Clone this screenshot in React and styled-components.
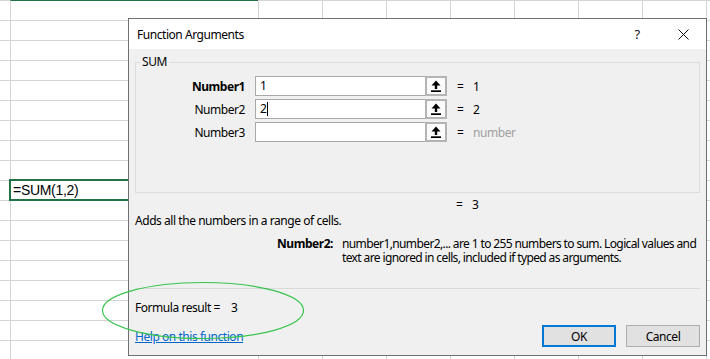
import styled, { createGlobalStyle } from "styled-components";

const GlobalStyle = createGlobalStyle`
  html, body {
    margin: 0;
    padding: 0;
    background: #fff;
  }
  body {
    width: 710px;
    height: 359px;
    overflow: hidden;
    font-family: "Noto Sans", "Liberation Sans", sans-serif;
  }
`;

const COLUMN_COUNT = 10;
const ROW_COUNT = 18;
const SELECTED_ROW = 9;

const args = [
  { name: "Number1", value: "1", result: "1", bold: true },
  { name: "Number2", value: "2", result: "2", caret: true },
  { name: "Number3", value: "", result: "number", muted: true },
];

const Screen = styled.div`
  position: relative;
  width: 710px;
  height: 359px;
  overflow: hidden;
`;

const Sheet = styled.div`
  display: grid;
  grid-template-columns: 10px 248px repeat(8, 64px);
  grid-auto-rows: 20px;
`;

const Cell = styled.div`
  box-sizing: border-box;
  border-left: ${(p) => (p.$edge ? "none" : "1px solid #d4d4d4")};
  border-top: 1px solid ${(p) => (p.$accent ? "#217346" : "#d4d4d4")};
`;

const ActiveCell = styled(Cell)`
  position: relative;
  z-index: 1;
  outline: 2px solid #217346;
  outline-offset: -1px;
  padding-left: 2px;
  font-family: "Liberation Sans", sans-serif;
  font-size: 14px;
  letter-spacing: -0.3px;
  line-height: 19px;
  white-space: nowrap;
  color: #000;
`;

const Dialog = styled.div`
  position: absolute;
  left: 128px;
  top: 18px;
  z-index: 2;
  width: 579px;
  height: 338px;
  box-sizing: border-box;
  border: 1px solid #707070;
  background: #f0f0f0;
  display: flex;
  flex-direction: column;
  font-family: "Noto Sans", sans-serif;
  font-size: 12px;
  letter-spacing: -0.45px;
  color: #000;
`;

const TitleBar = styled.div`
  height: 30px;
  flex-shrink: 0;
  background: #fff;
  display: flex;
  align-items: center;
  padding-left: 8px;
`;

const Title = styled.div`
  flex: 1;
`;

const TitleButton = styled.div`
  width: 46px;
  height: 30px;
  display: flex;
  align-items: center;
  justify-content: center;
  font-size: 13px;
  color: #111;
`;

const Body = styled.div`
  flex: 1;
  display: flex;
  flex-direction: column;
  padding: 0 6px;
`;

const GroupBox = styled.div`
  position: relative;
  margin-top: 13px;
  height: 131px;
  box-sizing: border-box;
  border: 1px solid #dcdcdc;
  padding-top: 13px;
  display: flex;
  flex-direction: column;
  gap: 3px;
`;

const Legend = styled.span`
  position: absolute;
  left: 4px;
  top: -9px;
  padding: 0 2px;
  background: #f0f0f0;
  line-height: 16px;
`;

const ArgRow = styled.div`
  display: grid;
  grid-template-columns: 109px 170px 22px 26px auto;
  align-items: center;
  height: ${(p) => p.$height || 20}px;
  margin-top: ${(p) => p.$offset || 0}px;
`;

const ArgLabel = styled.div`
  text-align: right;
  padding-right: 10px;
  margin-right: -10px;
  font-weight: ${(p) => (p.$bold ? 700 : 400)};
`;

const ArgInput = styled.div`
  grid-column: 2;
  margin-left: 10px;
  width: 170px;
  height: 20px;
  box-sizing: border-box;
  border: 1px solid #a9a9a9;
  border-right: none;
  background: #fff;
  padding-left: 4px;
  line-height: 18px;
  color: #000;
`;

const Caret = styled.span`
  display: inline-block;
  width: 1px;
  height: 14px;
  margin-left: 1px;
  vertical-align: -3px;
  background: #000;
`;

const RefButton = styled.div`
  margin-left: 10px;
  width: 22px;
  height: 20px;
  box-sizing: border-box;
  border: 2px solid #b4b4b4;
  background: #fbfbfb;
  display: flex;
  align-items: center;
  justify-content: center;
`;

const Equals = styled.div`
  grid-column: 4;
  margin-left: 20px;
`;

const ArgResult = styled.div`
  grid-column: 5;
  margin-left: 10px;
  color: ${(p) => (p.$muted ? "#a0a0a0" : "#000")};
`;

const Description = styled.div`
  line-height: 16px;
`;

const ArgHelp = styled.div`
  display: flex;
  margin-top: 8px;
  line-height: 14px;
`;

const ArgHelpName = styled.div`
  width: 198px;
  flex-shrink: 0;
  text-align: right;
  font-weight: 700;
`;

const ArgHelpText = styled.div`
  margin-left: 9px;
  white-space: nowrap;
  letter-spacing: -0.62px;
`;

const Separator = styled.div`
  margin-top: 23px;
  height: 1px;
  background: #d9d9d9;
`;

const FormulaResult = styled.div`
  margin-top: 11px;
  line-height: 16px;
  display: flex;
  gap: 11px;
`;

const Footer = styled.div`
  margin-top: 9px;
  display: flex;
  align-items: center;
`;

const HelpLink = styled.a`
  flex: 1;
  color: #0066cc;
  text-decoration: underline;
  cursor: pointer;
`;

const Button = styled.button`
  width: 74px;
  height: 22px;
  margin-left: 10px;
  box-sizing: border-box;
  border: ${(p) => (p.$primary ? "2px solid #0078d7" : "1px solid #adadad")};
  background: #e1e1e1;
  font-family: inherit;
  font-size: inherit;
  letter-spacing: inherit;
  color: #000;
  padding: 0;
`;

const Annotation = styled.svg`
  position: absolute;
  left: 101px;
  top: 281px;
  z-index: 3;
  overflow: visible;
`;

const UpArrow = () => (
  <svg width="10" height="12" viewBox="0 0 10 12">
    <path d="M5 0.5 L9.5 5.5 L6.2 5.5 L6.2 9 L3.8 9 L3.8 5.5 L0.5 5.5 Z" fill="#000" />
    <rect x="0" y="10.3" width="10" height="1.7" fill="#000" />
  </svg>
);

const CloseIcon = () => (
  <svg width="11" height="11" viewBox="0 0 11 11">
    <path d="M0.5 0.5 L10.5 10.5 M10.5 0.5 L0.5 10.5" stroke="#111" strokeWidth="1" />
  </svg>
);

const App = () => {
  const cells = [];
  for (let r = 0; r < ROW_COUNT; r++) {
    for (let c = 0; c < COLUMN_COUNT; c++) {
      const key = `${r}-${c}`;
      if (r === SELECTED_ROW && c === 1) {
        cells.push(<ActiveCell key={key}>=SUM(1,2)</ActiveCell>);
      } else {
        cells.push(<Cell key={key} $edge={c === 0} $accent={r === 0 && c === 1} />);
      }
    }
  }

  return (
    <Screen>
      <GlobalStyle />
      <Sheet>{cells}</Sheet>

      <Dialog>
        <TitleBar>
          <Title>Function Arguments</Title>
          <TitleButton>?</TitleButton>
          <TitleButton>
            <CloseIcon />
          </TitleButton>
        </TitleBar>

        <Body>
          <GroupBox>
            <Legend>SUM</Legend>
            {args.map((arg) => (
              <ArgRow key={arg.name}>
                <ArgLabel $bold={arg.bold}>{arg.name}</ArgLabel>
                <ArgInput>
                  {arg.value}
                  {arg.caret && <Caret />}
                </ArgInput>
                <RefButton>
                  <UpArrow />
                </RefButton>
                <Equals>=</Equals>
                <ArgResult $muted={arg.muted}>{arg.result}</ArgResult>
              </ArgRow>
            ))}
          </GroupBox>

          <ArgRow $height={17} $offset={3}>
            <Equals>=</Equals>
            <ArgResult>3</ArgResult>
          </ArgRow>

          <Description>Adds all the numbers in a range of cells.</Description>

          <ArgHelp>
            <ArgHelpName>Number2:</ArgHelpName>
            <ArgHelpText>
              number1,number2,... are 1 to 255 numbers to sum. Logical values and
              <br />
              text are ignored in cells, included if typed as arguments.
            </ArgHelpText>
          </ArgHelp>

          <Separator />

          <FormulaResult>
            <span>Formula result =</span>
            <span>3</span>
          </FormulaResult>

          <Footer>
            <HelpLink>Help on this function</HelpLink>
            <Button $primary>OK</Button>
            <Button>Cancel</Button>
          </Footer>
        </Body>
      </Dialog>

      <Annotation width="204" height="59" viewBox="0 0 204 59">
        <ellipse cx="102" cy="29.5" rx="100.5" ry="28" fill="none" stroke="#38c44c" strokeWidth="1.2" />
      </Annotation>
    </Screen>
  );
};

export default App;
